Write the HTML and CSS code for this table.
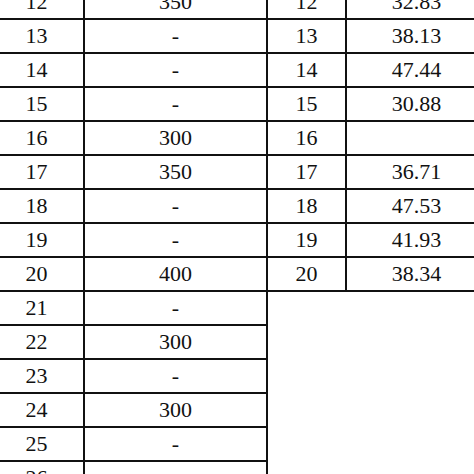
FILE: index.html
```html
<!DOCTYPE html>
<html>
<head>
<meta charset="utf-8">
<link rel="stylesheet" href="styles.css">
</head>
<body>
<div class="page">
  <div class="tbl tbl-left">
    <div class="c c1">12</div><div class="c c2">350</div>
    <div class="c c1">13</div><div class="c c2">-</div>
    <div class="c c1">14</div><div class="c c2">-</div>
    <div class="c c1">15</div><div class="c c2">-</div>
    <div class="c c1">16</div><div class="c c2">300</div>
    <div class="c c1">17</div><div class="c c2">350</div>
    <div class="c c1">18</div><div class="c c2">-</div>
    <div class="c c1">19</div><div class="c c2">-</div>
    <div class="c c1">20</div><div class="c c2">400</div>
    <div class="c c1">21</div><div class="c c2">-</div>
    <div class="c c1">22</div><div class="c c2">300</div>
    <div class="c c1">23</div><div class="c c2">-</div>
    <div class="c c1">24</div><div class="c c2">300</div>
    <div class="c c1">25</div><div class="c c2">-</div>
    <div class="c c1">26</div><div class="c c2"></div>
  </div>
  <div class="tbl tbl-right">
    <div class="c c3">12</div><div class="c c4">32.83</div>
    <div class="c c3">13</div><div class="c c4">38.13</div>
    <div class="c c3">14</div><div class="c c4">47.44</div>
    <div class="c c3">15</div><div class="c c4">30.88</div>
    <div class="c c3">16</div><div class="c c4"></div>
    <div class="c c3">17</div><div class="c c4">36.71</div>
    <div class="c c3">18</div><div class="c c4">47.53</div>
    <div class="c c3">19</div><div class="c c4">41.93</div>
    <div class="c c3">20</div><div class="c c4">38.34</div>
  </div>
</div>
</body>
</html>
```
FILE: styles.css
```css
html, body {
  margin: 0;
  padding: 0;
  background: #fff;
  overflow: hidden;
}
body {
  width: 474px;
  height: 474px;
}
.page {
  display: flex;
  align-items: flex-start;
  margin-top: -16px;
  margin-left: -12px;
  width: 520px;
  font-family: "Liberation Serif", "Times New Roman", serif;
  font-size: 22px;
  color: #111;
}
.tbl {
  display: grid;
  grid-auto-rows: 34px;
  border-top: 2px solid #111;
}
.tbl-left {
  grid-template-columns: 95px 183px;
  border-left: 2px solid #111;
}
.tbl-right {
  grid-template-columns: 79px 141px;
}
.c {
  box-sizing: border-box;
  border-right: 2px solid #111;
  border-bottom: 2px solid #111;
  text-align: center;
  line-height: 32px;
  white-space: nowrap;
}
```
